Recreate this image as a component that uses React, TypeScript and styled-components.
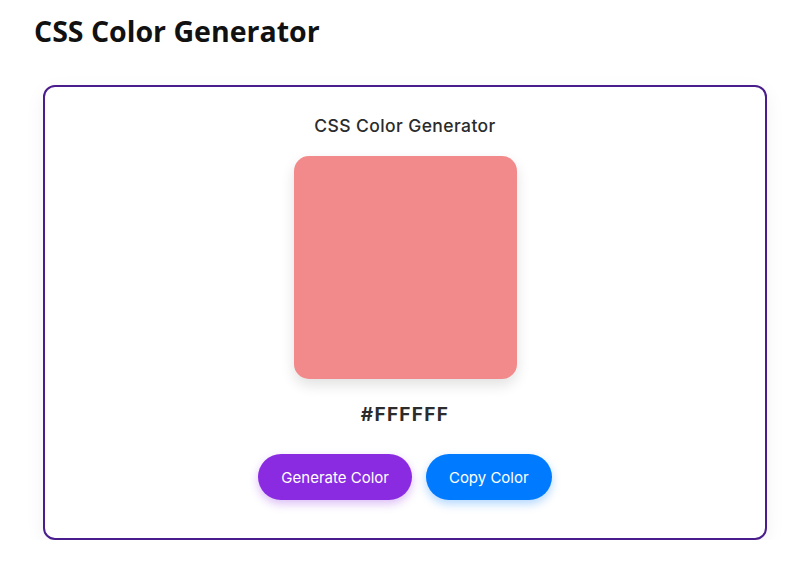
import React from "react";
import styled, { createGlobalStyle } from "styled-components";

const GlobalStyle = createGlobalStyle`
  body {
    margin: 0;
    background: #ffffff;
    font-family: Inter, "Noto Sans", sans-serif;
  }
`;

export default function App() {
  const color = "#f28a8b";
  return (
    <>
      <GlobalStyle />
      <Page>
        <Heading>CSS Color Generator</Heading>
        <Card>
          <CardTitle>CSS Color Generator</CardTitle>
          <Swatch style={{ background: color }} />
          <HexCode>#FFFFFF</HexCode>
          <Buttons>
            <ActionButton $bg="#8a2be2" $glow="rgba(138, 43, 226, 0.3)">
              Generate Color
            </ActionButton>
            <ActionButton $bg="#007bff" $glow="rgba(0, 123, 255, 0.3)">
              Copy Color
            </ActionButton>
          </Buttons>
        </Card>
      </Page>
    </>
  );
}

const Page = styled.div`
  padding: 12px 33px 0 43px;
  width: 724px;
`;

const Heading = styled.h1`
  margin: 0 0 34px -9px;
  font-family: "Open Sans", "Noto Sans", sans-serif;
  font-size: 28.5px;
  font-weight: 700;
  line-height: 39px;
  color: #111111;
`;

const Card = styled.div`
  display: flex;
  flex-direction: column;
  align-items: center;
  box-sizing: border-box;
  width: 724px;
  padding: 27px 0 38px;
  border: 2px solid #4a1d8c;
  border-radius: 12px;
  background: #ffffff;
  box-shadow: 0 6px 20px rgba(0, 0, 0, 0.06);
`;

const CardTitle = styled.h2`
  margin: 0 0 18px;
  font-size: 17.5px;
  font-weight: 500;
  line-height: 24px;
  letter-spacing: 0.4px;
  color: #2b2b2b;
`;

const Swatch = styled.div`
  width: 223px;
  height: 223px;
  border-radius: 15px;
  box-shadow: 0 6px 14px rgba(0, 0, 0, 0.12);
`;

const HexCode = styled.div`
  margin-top: 23px;
  font-size: 19px;
  font-weight: 700;
  line-height: 26px;
  letter-spacing: 1.3px;
  color: #2c2c2c;
`;

const Buttons = styled.div`
  display: flex;
  gap: 14px;
  margin-top: 26px;
`;

const ActionButton = styled.button<{ $bg: string; $glow: string }>`
  height: 46px;
  padding: 0 23px;
  border: none;
  border-radius: 23px;
  background: ${(p) => p.$bg};
  color: #ffffff;
  font-family: Inter, "Noto Sans", sans-serif;
  font-size: 15px;
  font-weight: 400;
  cursor: pointer;
  box-shadow: 0 4px 10px ${(p) => p.$glow};
`;
